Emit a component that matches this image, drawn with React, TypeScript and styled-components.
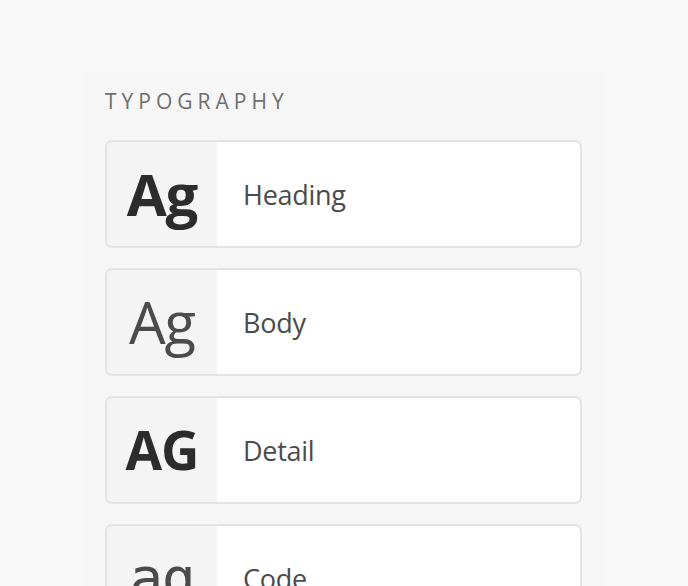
import React from 'react';
import styled, { createGlobalStyle } from 'styled-components';

const GlobalStyle = createGlobalStyle`
  html, body {
    margin: 0;
    padding: 0;
    background: #f8f8f8;
    overflow: hidden;
  }
  body {
    font-family: "Open Sans", "Noto Sans", sans-serif;
  }
`;

const Page = styled.div`
  width: 688px;
  height: 586px;
  padding-top: 72px;
  box-sizing: border-box;
`;

const Panel = styled.section`
  margin-left: 84px;
  width: 520px;
  min-height: 600px;
  background: #f6f6f6;
  padding: 17px 22px 0 21px;
  box-sizing: border-box;
`;

const Title = styled.h2`
  margin: 0 0 26px;
  font-size: 21px;
  font-weight: 400;
  letter-spacing: 5px;
  color: #6e6e6e;
  line-height: 25px;
`;

const List = styled.div`
  display: flex;
  flex-direction: column;
  gap: 20px;
`;

const Card = styled.div`
  display: flex;
  height: 108px;
  background: #fff;
  border: 2px solid #e3e3e3;
  border-radius: 7px;
  overflow: hidden;
  box-sizing: border-box;
`;

const Sample = styled.div<{ $weight: number; $mono?: boolean; $size: number }>`
  width: 110px;
  flex-shrink: 0;
  background: #f4f4f4;
  display: flex;
  align-items: center;
  justify-content: center;
  font-family: ${(p) => (p.$mono ? '"DejaVu Sans Mono", monospace' : '"Open Sans", "Noto Sans", sans-serif')};
  font-size: ${(p) => p.$size}px;
  font-weight: ${(p) => p.$weight};
  letter-spacing: -0.02em;
  color: ${(p) => (p.$weight > 500 ? '#2c2c2c' : '#4b4b4b')};
  padding-bottom: 2px;
  box-sizing: border-box;
`;

const Label = styled.div`
  display: flex;
  align-items: center;
  padding-left: 26px;
  font-size: 27px;
  color: #4b4b4b;
  letter-spacing: -0.01em;
`;

const styles = [
  { label: 'Heading', sample: 'Ag', weight: 700, size: 58 },
  { label: 'Body', sample: 'Ag', weight: 400, size: 58 },
  { label: 'Detail', sample: 'AG', weight: 700, size: 53 },
  { label: 'Code', sample: 'ag', weight: 400, size: 56, mono: true },
];

export default function App() {
  return (
    <Page>
      <GlobalStyle />
      <Panel>
        <Title>TYPOGRAPHY</Title>
        <List>
          {styles.map((s) => (
            <Card key={s.label}>
              <Sample $weight={s.weight} $mono={s.mono} $size={s.size}>
                {s.sample}
              </Sample>
              <Label>{s.label}</Label>
            </Card>
          ))}
        </List>
      </Panel>
    </Page>
  );
}
